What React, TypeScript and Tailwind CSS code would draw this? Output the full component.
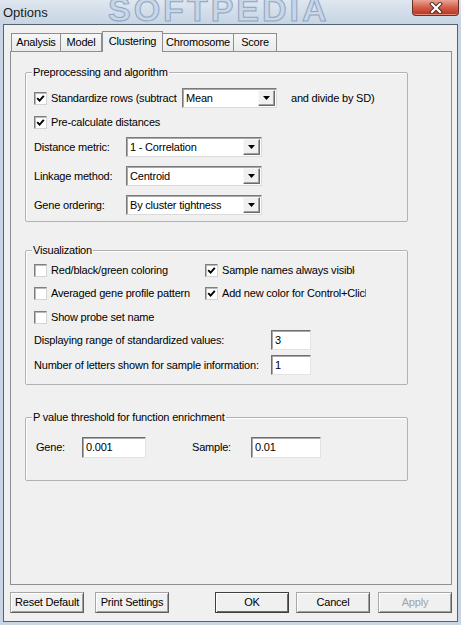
import type { ReactNode } from 'react'
import { clsx } from 'clsx'

function Check({ checked }: { checked?: boolean }) {
  return (
    <span className="w-[13px] h-[13px] shrink-0 bg-white border border-[#7f7f7f] border-b-[#d4d4d4] border-r-[#d4d4d4] shadow-[inset_1px_1px_0_#b8b8b8] flex items-center justify-center">
      {checked && (
        <svg width="9" height="9" viewBox="0 0 9 9">
          <path d="M1.2 4.2 L3.6 6.6 L7.8 1.8" fill="none" stroke="#000" strokeWidth="1.9" />
        </svg>
      )}
    </span>
  )
}

function CheckRow({ label, checked, className }: { label: string; checked?: boolean; className?: string }) {
  return (
    <div className={clsx('flex items-center h-[16px] whitespace-nowrap overflow-hidden', className)}>
      <Check checked={checked} />
      <span className="ml-[4px]">{label}</span>
    </div>
  )
}

function Combo({ value, className }: { value: string; className?: string }) {
  return (
    <div className={clsx('h-[20px] flex bg-white border border-[#7a7a7a] border-b-[#dadada] border-r-[#dadada] shadow-[inset_1px_1px_0_#a9a9a9]', className)}>
      <span className="flex-1 pl-[3px] flex items-center whitespace-nowrap overflow-hidden">{value}</span>
      <span className="w-[17px] my-[1px] mr-[1px] bg-[#f0f0f0] border border-[#f8f8f8] border-b-[#6a6a6a] border-r-[#6a6a6a] shadow-[inset_-1px_-1px_0_#a0a0a0] flex items-center justify-center">
        <svg width="7" height="4" viewBox="0 0 7 4">
          <path d="M0 0 H7 L3.5 4 Z" fill="#000" />
        </svg>
      </span>
    </div>
  )
}

function Field({ value, className }: { value: string; className?: string }) {
  return (
    <div className={clsx('bg-white border border-[#6f6f6f] border-b-[#e2e2e2] border-r-[#e2e2e2] shadow-[inset_1px_1px_0_#a8a8a8] pl-[3px] flex items-center', className)}>
      {value}
    </div>
  )
}

function Group({ title, className, children }: { title: string; className?: string; children: ReactNode }) {
  return (
    <div className={clsx('relative ml-[14px] w-[383px] border border-[#b2b2b2] rounded-[2px] shadow-[inset_1px_1px_0_#ffffff]', className)}>
      <span className="absolute left-[6px] top-[-8px] px-[1px] bg-[#f0f0f0] leading-[14px] whitespace-nowrap">{title}</span>
      {children}
    </div>
  )
}

function Btn({ label, className, disabled, primary }: { label: string; className?: string; disabled?: boolean; primary?: boolean }) {
  return (
    <button
      className={clsx(
        'h-[21px] w-[74px] bg-[#f0f0f0] border flex items-center justify-center',
        primary
          ? 'border-[#404040] shadow-[inset_1px_1px_0_#ffffff,inset_-1px_-1px_0_#6a6a6a]'
          : 'border-[#a6a6a6] border-b-[#5f5f5f] border-r-[#5f5f5f] shadow-[inset_1px_1px_0_#ffffff,inset_-1px_-1px_0_#a0a0a0]',
        disabled ? 'text-[#a3a3a3]' : 'text-black',
        className
      )}
    >
      {label}
    </button>
  )
}

const TABS = [
  { label: 'Analysis', w: 'w-[50px] border-l' },
  { label: 'Model', w: 'w-[41px]' },
  { label: 'Clustering', w: 'w-[61px]', active: true },
  { label: 'Chromosome', w: 'w-[71px]' },
  { label: 'Score', w: 'w-[43px]' },
]

export default function App() {
  return (
    <div className="w-[461px] h-[625px] overflow-hidden bg-[#c8d5e4] font-['Liberation_Sans',Arial,sans-serif] text-[11px] tracking-[-0.2px] text-black flex flex-col">
      {/* title bar */}
      <div className="relative h-[24px] shrink-0 flex items-start pl-[3px] bg-gradient-to-b from-[#dfe7f0] to-[#c6d4e4] overflow-hidden">
        <span className="absolute left-[108px] top-[-8px] text-[34px] leading-[34px] font-bold tracking-[3px] text-[#c9d6e6] [-webkit-text-stroke:1px_#8fa6c4] select-none">
          SOFTPEDIA
        </span>
        <span className="relative mt-[3px] text-[13px] tracking-normal text-[#1b1b1b]">Options</span>
        <div className="absolute right-[2px] top-0 w-[47px] h-[16px] rounded-b-[4px] border border-t-0 border-[#6a2f27] bg-gradient-to-b from-[#e9a396] via-[#d35d48] to-[#b8301d] flex items-center justify-center shadow-[inset_0_-1px_0_#e88a78]">
          <svg width="14" height="12" viewBox="0 0 14 12">
            <path d="M3 2 L11 10 M11 2 L3 10" stroke="#4a2a26" strokeWidth="4" strokeLinecap="square" />
            <path d="M3 2 L11 10 M11 2 L3 10" stroke="#ffffff" strokeWidth="2.2" strokeLinecap="square" />
          </svg>
        </div>
      </div>

      {/* client area */}
      <div className="mx-[3px] h-[598px] shrink-0 border border-[#55616f] bg-[#f0f0f0] flex flex-col">
        {/* tabs */}
        <div className="mt-[6px] ml-[7px] h-[20px] flex items-end">
          {TABS.map(t =>
            t.active ? (
              <div
                key={t.label}
                className={clsx('relative z-10 -mb-px h-[21px] border border-b-0 border-[#8c8e94] bg-[#f0f0f0] flex items-center justify-center pb-[1px]', t.w)}
              >
                {t.label}
              </div>
            ) : (
              <div
                key={t.label}
                className={clsx('h-[18px] border-t border-r border-[#8c8e94] bg-gradient-to-b from-[#f7f7f7] to-[#ebebeb] flex items-center justify-center', t.w)}
              >
                {t.label}
              </div>
            )
          )}
        </div>

        {/* tab panel */}
        <div className="ml-[6px] w-[442px] h-[534px] border border-[#8c8e94] bg-[#f0f0f0] flex flex-col">
          <Group title="Preprocessing and algorithm" className="mt-[20px] h-[150px]">
            <div className="pl-[8px] pt-[15px] flex flex-col">
              <div className="flex items-center h-[20px] whitespace-nowrap">
                <Check checked />
                <span className="ml-[4px] w-[131px]">Standardize rows (subtract</span>
                <Combo value="Mean" className="w-[95px]" />
                <span className="ml-[14px]">and divide by SD)</span>
              </div>
              <CheckRow label="Pre-calculate distances" checked className="mt-[6px]" />
              <div className="flex items-center h-[20px] mt-[7px]">
                <span className="w-[92px]">Distance metric:</span>
                <Combo value="1 - Correlation" className="w-[136px]" />
              </div>
              <div className="flex items-center h-[20px] mt-[9px]">
                <span className="w-[92px]">Linkage method:</span>
                <Combo value="Centroid" className="w-[136px]" />
              </div>
              <div className="flex items-center h-[20px] mt-[9px]">
                <span className="w-[92px]">Gene ordering:</span>
                <Combo value="By cluster tightness" className="w-[136px]" />
              </div>
            </div>
          </Group>

          <Group title="Visualization" className="mt-[28px] h-[135px]">
            <div className="pl-[8px] pt-[11px] flex flex-col">
              <div className="flex">
                <CheckRow label="Red/black/green coloring" className="w-[171px]" />
                <CheckRow label="Sample names always visible" checked className="w-[150px]" />
              </div>
              <div className="flex mt-[7px]">
                <CheckRow label="Averaged gene profile pattern" className="w-[171px]" />
                <CheckRow label="Add new color for Control+Click" checked className="w-[161px]" />
              </div>
              <CheckRow label="Show probe set name" className="mt-[8px]" />
              <div className="flex items-center mt-[5px]">
                <span className="w-[237px]">Displaying range of standardized values:</span>
                <Field value="3" className="w-[40px] h-[20px]" />
              </div>
              <div className="flex items-center mt-[5px]">
                <span className="w-[237px]">Number of letters shown for sample information:</span>
                <Field value="1" className="w-[40px] h-[20px]" />
              </div>
            </div>
          </Group>

          <Group title="P value threshold for function enrichment" className="mt-[32px] h-[64px]">
            <div className="pl-[10px] pt-[19px] flex items-center">
              <span className="w-[46px]">Gene:</span>
              <Field value="0.001" className="w-[64px] h-[21px]" />
              <span className="ml-[46px] w-[59px]">Sample:</span>
              <Field value="0.01" className="w-[70px] h-[21px]" />
            </div>
          </Group>
        </div>

        {/* buttons */}
        <div className="mt-[7px] flex">
          <Btn label="Reset Default" className="ml-[6px]" />
          <Btn label="Print Settings" className="ml-[11px]" />
          <Btn label="OK" primary className="ml-[46px]" />
          <Btn label="Cancel" className="ml-[7px]" />
          <Btn label="Apply" disabled className="ml-[8px]" />
        </div>
      </div>
    </div>
  )
}
